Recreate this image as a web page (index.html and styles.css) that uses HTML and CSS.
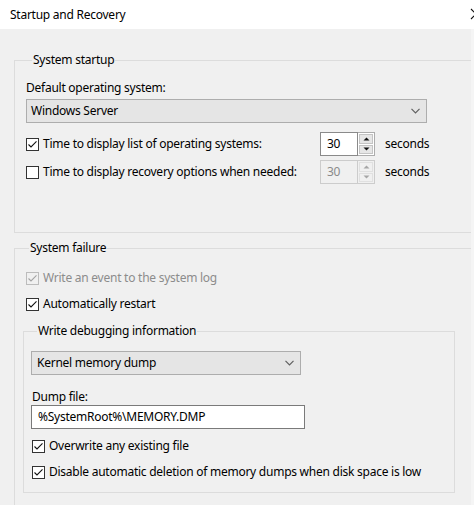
FILE: index.html
```html
<!DOCTYPE html>
<html lang="en">
<head>
<meta charset="utf-8">
<title>Startup and Recovery</title>
<link rel="stylesheet" href="styles.css">
</head>
<body>
<div class="window">
  <div class="titlebar">
    <span class="title">Startup and Recovery</span>
    <svg class="close" width="12" height="12" viewBox="0 0 12 12"><path d="M1 1 L11 11 M11 1 L1 11" stroke="#111" stroke-width="1.1" fill="none"/></svg>
  </div>
  <div class="body">
    <div class="clip">
      <fieldset class="group group-startup">
        <legend>System startup</legend>
        <div class="field-label">Default operating system:</div>
        <div class="combo combo-os">
          <span>Windows Server</span>
          <svg class="chev" width="9" height="6" viewBox="0 0 9 6"><path d="M0.5 0.8 L4.5 4.8 L8.5 0.8" stroke="#606060" stroke-width="1.2" fill="none"/></svg>
        </div>
        <div class="timers">
          <label class="check">
            <svg class="box" width="13" height="13" viewBox="0 0 13 13"><rect x="0.5" y="0.5" width="12" height="12" fill="#fff" stroke="#333"/><path d="M2.5 6.5 L5 9 L10.5 3.3" stroke="#111" stroke-width="1.1" fill="none"/></svg>
            <span>Time to display list of operating systems:</span>
          </label>
          <div class="spin">
            <span class="spin-value">30</span>
            <span class="spin-btns">
              <span class="spin-btn"><svg width="7" height="4" viewBox="0 0 7 4"><path d="M0.5 3.5 L3.5 0.5 L6.5 3.5 Z" fill="#111"/></svg></span>
              <span class="spin-btn"><svg width="7" height="4" viewBox="0 0 7 4"><path d="M0.5 0.5 L3.5 3.5 L6.5 0.5 Z" fill="#111"/></svg></span>
            </span>
          </div>
          <span class="unit">seconds</span>

          <label class="check">
            <svg class="box" width="13" height="13" viewBox="0 0 13 13"><rect x="0.5" y="0.5" width="12" height="12" fill="#fff" stroke="#333"/></svg>
            <span>Time to display recovery options when needed:</span>
          </label>
          <div class="spin spin-disabled">
            <span class="spin-value">30</span>
            <span class="spin-btns">
              <span class="spin-btn"><svg width="7" height="4" viewBox="0 0 7 4"><path d="M0.5 3.5 L3.5 0.5 L6.5 3.5 Z" fill="#a6a6a6"/></svg></span>
              <span class="spin-btn"><svg width="7" height="4" viewBox="0 0 7 4"><path d="M0.5 0.5 L3.5 3.5 L6.5 0.5 Z" fill="#a6a6a6"/></svg></span>
            </span>
          </div>
          <span class="unit">seconds</span>
        </div>
      </fieldset>

      <fieldset class="group group-failure">
        <legend>System failure</legend>
        <div class="rows">
          <label class="check row disabled">
            <svg class="box" width="13" height="13" viewBox="0 0 13 13"><rect x="0.5" y="0.5" width="12" height="12" fill="none" stroke="#bcbcbc"/><path d="M2.5 6.5 L5 9 L10.5 3.3" stroke="#a3a3a3" stroke-width="1.1" fill="none"/></svg>
            <span>Write an event to the system log</span>
          </label>
          <label class="check row">
            <svg class="box" width="13" height="13" viewBox="0 0 13 13"><rect x="0.5" y="0.5" width="12" height="12" fill="#fff" stroke="#333"/><path d="M2.5 6.5 L5 9 L10.5 3.3" stroke="#111" stroke-width="1.1" fill="none"/></svg>
            <span>Automatically restart</span>
          </label>
        </div>
        <fieldset class="group group-debug">
          <legend>Write debugging information</legend>
          <div class="combo combo-dump">
            <span>Kernel memory dump</span>
            <svg class="chev" width="9" height="6" viewBox="0 0 9 6"><path d="M0.5 0.8 L4.5 4.8 L8.5 0.8" stroke="#606060" stroke-width="1.2" fill="none"/></svg>
          </div>
          <div class="field-label dump-label">Dump file:</div>
          <div class="textbox">%SystemRoot%\MEMORY.DMP</div>
          <label class="check row">
            <svg class="box" width="13" height="13" viewBox="0 0 13 13"><rect x="0.5" y="0.5" width="12" height="12" fill="#fff" stroke="#333"/><path d="M2.5 6.5 L5 9 L10.5 3.3" stroke="#111" stroke-width="1.1" fill="none"/></svg>
            <span>Overwrite any existing file</span>
          </label>
          <label class="check row">
            <svg class="box" width="13" height="13" viewBox="0 0 13 13"><rect x="0.5" y="0.5" width="12" height="12" fill="#fff" stroke="#333"/><path d="M2.5 6.5 L5 9 L10.5 3.3" stroke="#111" stroke-width="1.1" fill="none"/></svg>
            <span>Disable automatic deletion of memory dumps when disk space is low</span>
          </label>
        </fieldset>
      </fieldset>
    </div>
    <div class="edge"></div>
  </div>
</div>
</body>
</html>
```

FILE: styles.css
```css
* { box-sizing: border-box; }

html, body {
  margin: 0;
  padding: 0;
  background: #f0f0f0;
}

body {
  font-family: "Noto Sans", "Open Sans", sans-serif;
  font-size: 12px;
  line-height: 16px;
  letter-spacing: -0.25px;
  color: #000;
  overflow: hidden;
}

.window {
  width: 474px;
  height: 505px;
  display: flex;
  flex-direction: column;
  overflow: hidden;
}

.titlebar {
  height: 29px;
  flex: none;
  background: #fff;
  display: flex;
  align-items: center;
  justify-content: space-between;
  padding-left: 10px;
  overflow: hidden;
}

.title {
  font-size: 12px;
}

.close {
  margin-right: -8px;
  margin-top: -2px;
}

.body {
  flex: 1;
  display: flex;
  background: #f0f0f0;
}

.clip {
  width: 471px;
  overflow: hidden;
  padding: 23px 0 0 14px;
}

.edge {
  flex: none;
  width: 3px;
  background: #f5f5f5;
}

.group {
  margin: 0;
  min-width: 0;
  border: 1px solid #dcdcdc;
}

.group legend {
  padding: 0 1px;
  margin-left: 6px;
  line-height: 16px;
}

.group-startup {
  width: 470px;
  padding: 12px 0 48px 11px;
}

.field-label {
  height: 16px;
}

.combo {
  height: 24px;
  border: 1px solid #adadad;
  background: #e5e5e5;
  display: flex;
  align-items: center;
  justify-content: space-between;
  padding: 0 6px 0 4px;
}

.combo-os {
  width: 401px;
  margin-top: 3px;
}

.chev {
  flex: none;
}

.timers {
  margin-top: 9px;
  display: grid;
  grid-template-columns: 284px 55px auto;
  grid-auto-rows: 24px;
  column-gap: 10px;
  row-gap: 4px;
  align-items: center;
}

.check {
  display: flex;
  align-items: center;
  gap: 4px;
  white-space: nowrap;
}

.box {
  flex: none;
}

.spin {
  display: flex;
  height: 24px;
  width: 55px;
}

.spin-value {
  width: 38px;
  border: 1px solid #8a8a8a;
  background: #fff;
  padding-left: 6px;
  display: flex;
  align-items: center;
}

.spin-btns {
  width: 17px;
  display: flex;
  flex-direction: column;
  border: 1px solid #adadad;
  border-left: none;
  background: #fff;
  padding: 1px;
  gap: 1px;
}

.spin-btn {
  flex: 1;
  background: #e6e6e6;
  border: 1px solid #c4c4c4;
  display: flex;
  align-items: center;
  justify-content: center;
}

.spin-disabled .spin-value {
  background: #f0f0f0;
  border-color: #cccccc;
  color: #8a8a8a;
}

.spin-disabled .spin-btns {
  background: #f0f0f0;
  border-color: #cccccc;
}

.spin-disabled .spin-btn {
  background: #f0f0f0;
  border-color: #e0e0e0;
}

.group-failure {
  width: 470px;
  margin-top: 7px;
  padding: 9px 0 20px 8px;
}

.rows {
  padding-left: 3px;
}

.row {
  height: 26px;
}

.disabled {
  color: #8c8c8c;
}

.group-debug {
  width: 432px;
  margin-top: 6px;
  padding: 12px 0 7px 7px;
}

.combo-dump {
  width: 270px;
  padding-left: 5px;
}

.dump-label {
  margin-top: 14px;
  padding-left: 1px;
}

.textbox {
  width: 274px;
  height: 24px;
  border: 1px solid #7a7a7a;
  background: #fff;
  padding-left: 6px;
  display: flex;
  align-items: center;
  margin-bottom: 4px;
}

.group-debug .row {
  padding-left: 1px;
}
```
